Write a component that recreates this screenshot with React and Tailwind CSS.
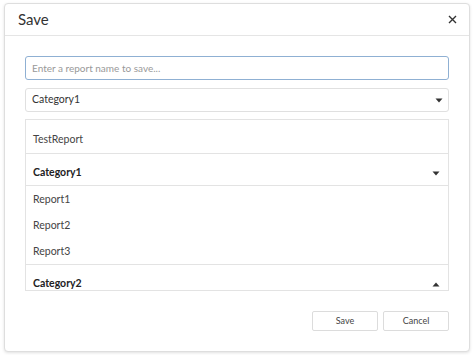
import React from 'react';

const Caret = ({ up = false }) => (
  <svg width="8" height="5" viewBox="0 0 8 5" className={up ? 'rotate-180' : ''}>
    <path d="M0.5 0.5h7L4 4.5z" fill="#333" />
  </svg>
);

const Category = ({ name, up }) => (
  <div className="flex h-[33px] items-end justify-between border-y border-[#e3e3e3] pb-[4px] pl-[7px] pr-[8px]">
    <span className="text-[10.5px] font-bold text-[#222]">{name}</span>
    <span className="mb-[5px]"><Caret up={up} /></span>
  </div>
);

const Item = ({ name }) => (
  <div className="flex h-[26px] items-center pl-[7px] pt-[2px] text-[10.5px] text-[#444]">{name}</div>
);

export default function App() {
  return (
    <div className="h-[355px] w-[474px] bg-white pl-[4px] pr-[4px] pt-[3px]" style={{ fontFamily: 'Lato, "Noto Sans", sans-serif' }}>
      <div className="flex h-[349px] flex-col rounded-[4px] border border-[#dedede] bg-white shadow-[0_1px_3px_rgba(0,0,0,0.12)]">
        {/* header */}
        <div className="flex h-[32px] items-center justify-between border-b border-[#e5e5e5] pl-[13px] pr-[12px]">
          <span className="text-[15px] text-[#333]">Save</span>
          <svg width="9" height="9" viewBox="0 0 9 9">
            <path d="M1 1l7 7M8 1l-7 7" stroke="#333" strokeWidth="1.4" />
          </svg>
        </div>

        {/* body */}
        <div className="flex flex-col px-[20px] pt-[20px]">
          <div className="flex h-[24px] items-center rounded-[3px] border border-[#8fb0d3] px-[6px] text-[10px] text-[#999]">
            Enter a report name to save...
          </div>
          <div className="mt-[8px] flex h-[24px] items-center justify-between rounded-[3px] border border-[#e0e0e0] pl-[6px] pr-[5px] text-[10.5px] text-[#333]">
            <span>Category1</span>
            <Caret />
          </div>

          <div className="mt-[7px] h-[172px] overflow-hidden border border-[#e3e3e3]">
            <div className="flex h-[33px] items-end pb-[5px] pl-[7px] text-[10.5px] text-[#444]">TestReport</div>
            <Category name="Category1" />
            <Item name="Report1" />
            <Item name="Report2" />
            <Item name="Report3" />
            <Category name="Category2" up />
          </div>
        </div>

        {/* footer */}
        <div className="mt-[20px] flex justify-end gap-[5px] pr-[20px]">
          <button className="h-[20px] w-[66px] rounded-[2px] border border-[#dcdcdc] bg-white text-[9px] text-[#444]">Save</button>
          <button className="h-[20px] w-[66px] rounded-[2px] border border-[#dcdcdc] bg-white text-[9px] text-[#444]">Cancel</button>
        </div>
      </div>
    </div>
  );
}
